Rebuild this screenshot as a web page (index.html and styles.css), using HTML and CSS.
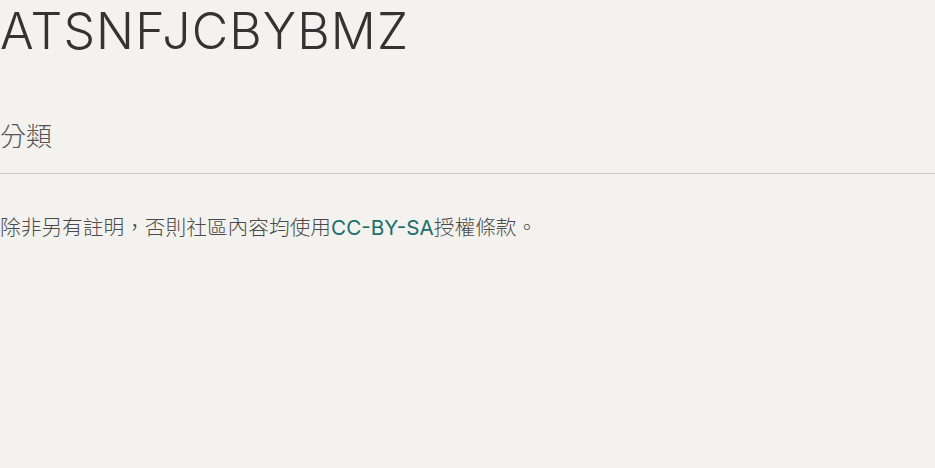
FILE: index.html
```html
<!DOCTYPE html>
<html lang="zh-Hant">
<head>
  <meta charset="UTF-8" />
  <meta name="viewport" content="width=device-width, initial-scale=1" />
  <title>ATSNFJCBYBMZ</title>
  <link rel="stylesheet" href="styles.css">
</head>
<body>
  <main>
    <h1 class="title">ATSNFJCBYBMZ</h1>
    <h2 class="section-title">分類</h2>
    <footer class="license">
      除非另有註明，否則社區內容均使用<a href="#">CC-BY-SA</a>授權條款。
    </footer>
  </main>
</body>
</html>
```

FILE: styles.css
```css
* {
  box-sizing: border-box;
}
body {
  margin: 0;
  background: #f3f2ee;
  color: #333;
  font-family: Inter, "Noto Sans CJK TC", sans-serif;
}
main {
  display: flex;
  flex-direction: column;
}
.title {
  margin: 0;
  font-weight: 300;
  font-size: 50px;
  line-height: 62px;
  color: #333;
  letter-spacing: 1.1px;
}
.section-title {
  margin: 59px 0 0;
  font-weight: 300;
  font-size: 26px;
  line-height: 32px;
  color: #555;
  padding-bottom: 20px;
  border-bottom: 1px solid #cfcdc8;
}
.license {
  margin-top: 40px;
  font-size: 20.7px;
  font-weight: 300;
  line-height: 28px;
  color: #4a4a4a;
}
.license a {
  color: #1b6e6c;
  font-weight: 400;
  text-decoration: none;
}
```
